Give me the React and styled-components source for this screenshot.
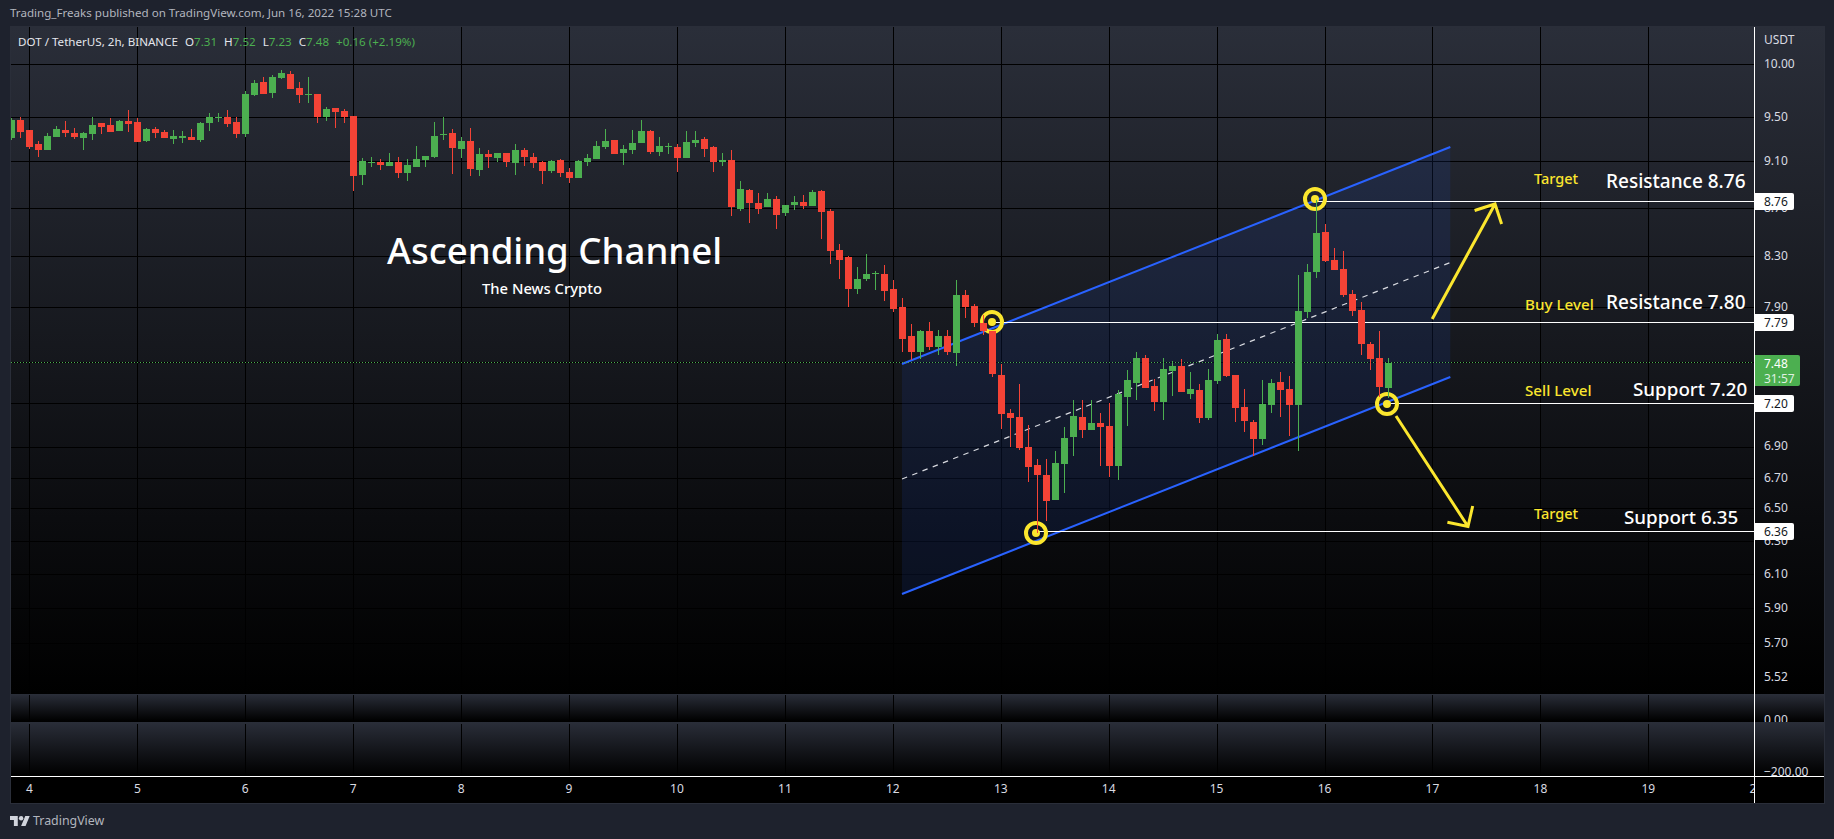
import React from 'react';
import styled, { createGlobalStyle } from 'styled-components';

const FONT = `"Noto Sans", "DejaVu Sans", sans-serif`;
const UP = '#4caf50';
const DOWN = '#f44336';
const YELLOW = '#fbe62e';
const PANE_BG = 'linear-gradient(to bottom, #2a2e39 0%, #000 100%)';

const Global = createGlobalStyle`
  html, body { margin: 0; padding: 0; background: #1e222d; overflow: hidden; }
  * { box-sizing: border-box; }
`;

const Page = styled.div`
  width: 1834px; height: 839px; display: flex; flex-direction: column;
  background: #1e222d; font-family: ${FONT};
`;
const Header = styled.header`
  height: 26px; flex: none; display: flex; align-items: center; padding: 0 0 2px 10px;
  font-size: 11.6px; color: #b2b5be; white-space: nowrap;
`;
const ChartFrame = styled.main`
  flex: none; width: 1815px; height: 778px; margin-left: 10px; border: 1px solid #2a2e39;
  display: grid; grid-template-columns: 1743px 1fr; grid-template-rows: 667px 28px 54px 27px;
  background: #000;
`;
const MainPane = styled.section`
  position: relative; overflow: hidden; background: ${PANE_BG};
`;
const ChartCanvas = styled.svg`
  display: block; width: 1743px; height: 667px;
`;
const SubCanvas = styled.svg`
  display: block; width: 1743px; height: 100%;
`;
const SubPane = styled.section`
  overflow: hidden; background: ${PANE_BG}; border-bottom: 1px solid #000;
`;
const Legend = styled.div`
  position: absolute; left: 7px; top: 6px; display: flex; gap: 7px; font-size: 11.6px; line-height: 18px;
  color: #e4e6ec; white-space: nowrap;
`;
const LegendItem = styled.span``;
const LegendValue = styled.span` color: ${UP}; `;
const Annotation = styled.div`
  position: absolute; left: ${p => p.$x}px; top: ${p => p.$y}px; transform: translateY(-50%);
  white-space: nowrap; line-height: 1.2; font-weight: 500; font-size: ${p => p.$size}px; color: ${p => p.$color};
`;
const PriceAxis = styled.aside`
  position: relative; overflow: hidden; background: ${PANE_BG}; border-left: 1px solid #fff;
`;
const Currency = styled.div`
  position: absolute; left: 9px; top: 5px; font-size: 12px; line-height: 16px; color: #d9dbe2;
`;
const PriceTick = styled.div`
  position: absolute; left: 9px; transform: translateY(-50%); font-size: 12px; line-height: 16px;
  color: #d9dbe2; white-space: nowrap;
`;
const LevelBadge = styled.div`
  position: absolute; left: 0; width: 39px; height: 17px; padding-left: 9px; background: #fff;
  color: #131722; font-size: 12px; line-height: 17px; border-radius: 0 2px 2px 0;
`;
const LastPriceBadge = styled.div`
  position: absolute; left: 0; width: 45px; height: 31px; padding-left: 9px; background: ${UP};
  color: #fff; font-size: 12px; line-height: 15px; display: flex; flex-direction: column; justify-content: center;
  border-radius: 0 2px 2px 0;
`;
const Countdown = styled.span` color: #dff0e0; `;
const TimeAxis = styled.div`
  position: relative; overflow: hidden; background: #000; border-top: 1px solid #fff;
`;
const TimeTick = styled.span`
  position: absolute; top: 4px; transform: translateX(-50%); font-size: 12px; line-height: 16px; color: #d9dbe2;
`;
const AxisCorner = styled.div`
  background: #000; border-top: 1px solid #fff; border-left: 1px solid #fff;
`;
const Footer = styled.footer`
  flex: 1; display: flex; align-items: center; gap: 3px; padding: 0 0 2px 10px;
  font-size: 12.4px; color: #b2b5be;
`;
const Logo = styled.svg` width: 20px; height: 10px; fill: #d1d4dc; display: block; `;

/* candles: colour, body top, body bottom, wick top, wick bottom, read in 3x scale */
const G = 'g', R = 'r';
const GROUPS = [
  { start: -2, y0: 0, rows: [
    [G,360,414,355,420],[R,360,396,351,414],[R,390,442,390,447],[R,432,450,423,471],[G,408,450,400,450],[G,387,411,378,411],
    [R,390,399,363,411],[R,399,411,384,417],[G,399,414,396,450],[G,375,402,351,420],[R,369,381,369,402],[R,375,396,354,396],
    [G,363,393,360,393],[R,363,372,330,396],[R,366,426,354,426],[G,387,423,384,426],[R,387,399,381,414],[R,396,414,390,414],
    [G,408,417,390,432],[G,408,414,393,429],[R,411,420,387,420],[G,369,420,366,426],[G,351,369,339,393],[G,351,353,339,366],
    [R,351,372,330,381],[R,366,402,351,414],[G,282,402,273,411],[G,249,285,240,288],[R,246,282,231,282],[G,231,279,225,294],
    [G,219,234,210,237],[R,222,267,213,267],[R,264,285,246,309],[G,283,285,231,309],[R,282,351,282,369],[G,327,351,321,363],
    [R,324,336,324,384],[R,333,351,327,369],[R,348,528,348,573],[G,483,525,474,555],[G,487,489,471,501],[R,486,495,477,510],
    [G,486,498,459,498],[R,486,519,471,534],[G,495,519,477,543],[G,477,501,438,501],[G,468,480,468,501],[G,408,471,366,474],
    [G,402,405,351,420],[R,399,444,387,522],[G,423,447,411,474],[R,423,507,384,528],[G,462,510,444,528],[R,462,471,450,504],
    [G,459,474,459,486],[R,459,486,459,501],[G,450,489,432,525],[R,450,471,444,498],[R,471,489,459,504],[R,486,513,483,552],
    [G,483,513,480,519],[R,480,519,477,531],[R,516,534,504,549],[G,483,534,480,534],[G,474,486,462,498],[G,438,477,423,477],
    [G,423,441,387,447],[R,420,462,420,462],
  ]},
  { start: 66, y0: 90, rows: [
    [G,177,189,165,225],[G,159,180,120,192],[G,123,159,90,159],[R,123,186,120,192],[G,168,186,141,198],[G,168,170,159,192],
    [R,171,204,162,246],[G,156,204,123,204],[G,150,159,123,171],[R,147,177,141,201],[R,171,216,168,246],[G,210,216,189,228],
    [R,210,351,180,378],[G,297,357,273,363],[R,300,339,297,399],[R,339,357,309,372],[G,327,351,309,351],[R,327,375,318,417],
    [G,345,369,345,378],[G,336,345,318,360],[R,336,348,315,357],[G,306,348,300,348],[R,303,366,300,447],[R,363,483,357,522],
    [R,480,510,462,567],[R,501,597,498,651],[G,567,597,531,612],[G,552,567,492,573],[G,550,552,543,600],[R,552,603,525,633],
    [R,597,657,570,666],[R,651,747,624,786],[R,738,786,702,810],[G,723,786,720,807],[R,723,771,696,780],[G,738,771,720,795],
    [R,738,786,720,795],[G,615,789,570,828],[R,615,651,600,684],[R,648,699,642,711],[R,699,723,675,735],
  ]},
  { start: 107, y0: 270, rows: [
    [R,183,312,183,321],[R,315,432,282,477],[R,429,444,417,531],[R,441,534,342,540],[R,531,591,465,636],[R,585,615,567,790],
    [R,615,693,567,753],[G,579,690,543,690],[G,504,582,471,669],[G,438,501,390,558],[R,441,480,390,504],[G,459,480,390,480],
    [R,459,471,429,588],[R,468,588,399,621],[G,372,588,360,630],[G,330,381,300,468],[G,264,339,246,390],[R,264,354,255,354],
    [R,348,396,327,423],[G,297,396,264,450],[G,288,303,273,378],[R,288,366,267,366],
  ]},
  { start: 129, y0: 180, rows: [
    [G,627,642,576,657],[R,630,714,612,729],[G,600,714,567,720],[G,480,603,462,612],[R,477,588,462,591],[R,585,684,585,726],
    [R,681,723,627,756],[R,726,777,720,828],[G,672,777,600,795],[G,609,675,597,699],[R,606,630,576,711],[R,627,675,588,768],
    [G,393,675,285,813],[G,276,396,252,414],[G,159,276,60,294],[R,156,243,132,246],[R,240,270,204,270],[R,267,345,213,351],
    [R,342,393,330,408],[R,390,492,366,525],[R,492,537,486,570],[R,534,621,453,650],[G,549,624,534,655],
  ]},
];
const CANDLE_STEP = 107.93 / 12;
const candleX = k => Math.round(29.4 + CANDLE_STEP * k);
const CANDLES = GROUPS.flatMap(({ start, y0, rows }) => rows.map((r, i) => {
  const py = v => Math.round(y0 + v / 3);
  const top = py(r[1]);
  return { k: start + i, color: r[0] === G ? UP : DOWN, top, h: Math.max(1, py(r[2]) - top), hi: py(r[3]), lo: py(r[4]) };
}));

const DAYS = [4, 5, 6, 7, 8, 9, 10, 11, 12, 13, 14, 15, 16, 17, 18, 19, 20];
const dayX = i => 29.4 + 107.93 * i;
const GRID_Y = [64, 117, 161, 208, 256, 307, 362, 403, 447, 478, 508, 541, 574, 608, 643];
const TICKS = [
  ['10.00', 64], ['9.50', 117], ['9.10', 161], ['8.70', 208], ['8.30', 256], ['7.90', 307], ['7.50', 362], ['7.10', 403],
  ['6.90', 446], ['6.70', 478], ['6.50', 508], ['6.30', 541], ['6.10', 574], ['5.90', 608], ['5.70', 643], ['5.52', 677],
];
const LEVELS = [
  { label: '8.76', top: 193, y: 201.5, x: 1315 },
  { label: '7.79', top: 314, y: 322.5, x: 992 },
  { label: '7.20', top: 395, y: 403.5, x: 1387 },
  { label: '6.36', top: 523, y: 531.5, x: 1036 },
];
const PIVOTS = [[992, 322], [1036, 533], [1315, 199], [1387, 404]];
const TOP = 27, LEFT = 11;

const NOTES = [
  { text: 'Ascending Channel', x: 387, y: 251, size: 36.6, color: '#fff' },
  { text: 'The News Crypto', x: 482, y: 289, size: 14.8, color: '#fff' },
  { text: 'Target', x: 1534, y: 179, size: 14.5, color: YELLOW },
  { text: 'Resistance 8.76', x: 1606, y: 181, size: 19, color: '#fff' },
  { text: 'Buy Level', x: 1525, y: 304, size: 15.2, color: YELLOW },
  { text: 'Resistance 7.80', x: 1606, y: 302, size: 19, color: '#fff' },
  { text: 'Sell Level', x: 1525, y: 390, size: 15.2, color: YELLOW },
  { text: 'Support 7.20', x: 1633, y: 389, size: 18.8, color: '#fff' },
  { text: 'Target', x: 1534, y: 514, size: 14.5, color: YELLOW },
  { text: 'Support 6.35', x: 1624, y: 517, size: 18.8, color: '#fff' },
];

const Verticals = ({ y1, y2 }) => DAYS.map((_, i) => (
  <line key={i} x1={Math.round(dayX(i)) + 0.5} x2={Math.round(dayX(i)) + 0.5} y1={y1} y2={y2} stroke="#000" strokeWidth="1" />
));

const MainChart = () => (
  <ChartCanvas viewBox={`${LEFT} ${TOP} 1743 667`}>
    <Verticals y1={TOP} y2={694} />
    {GRID_Y.map(y => <line key={y} x1={LEFT} x2={1754} y1={y + 0.5} y2={y + 0.5} stroke="#000" strokeWidth="1" />)}
    <polygon points="902,364 1450.3,147 1450.3,377 902,594" fill="#2962ff" fillOpacity="0.1" />
    <line x1="902" y1="479" x2="1450.3" y2="262.5" stroke="#d8dae0" strokeWidth="1.2" strokeDasharray="5.500 5.500" />
    <line x1="902" y1="364" x2="1450.3" y2="147" stroke="#2962ff" strokeWidth="2" />
    <line x1="902" y1="594" x2="1450.3" y2="377" stroke="#2962ff" strokeWidth="2" />
    <line x1={LEFT} x2="1754" y1="362.5" y2="362.5" stroke={UP} strokeWidth="1" strokeDasharray="1 2" />
    {LEVELS.map(l => <line key={l.label} x1={l.x} x2="1754" y1={l.y} y2={l.y} stroke="#fff" strokeWidth="1" />)}
    {PIVOTS.map(([x, y]) => (
      <g key={x}>
        <circle cx={x} cy={y} r="10" fill="none" stroke={YELLOW} strokeWidth="4" />
        <circle cx={x} cy={y} r="4" fill={YELLOW} />
      </g>
    ))}
    <g fill="none" stroke={YELLOW} strokeWidth="3">
      <path d="M1432.2 319 L1495 204 M1474.6 210.5 L1495 204 L1501.6 224" />
      <path d="M1396 416 L1468 526.5 M1447.4 522.3 L1468 526.5 L1472.7 506" />
    </g>
    <g shapeRendering="crispEdges">
      {CANDLES.map(c => {
        const x = candleX(c.k);
        return (
          <g key={c.k} fill={c.color}>
            <rect x={x} y={c.hi} width="1" height={c.lo - c.hi} />
            <rect x={x - 3} y={c.top} width="7" height={c.h} />
          </g>
        );
      })}
    </g>
  </ChartCanvas>
);

const Sub = () => (
  <SubCanvas preserveAspectRatio="none" viewBox={`${LEFT} 0 1743 10`}>
    <Verticals y1={0.4} y2={10} />
  </SubCanvas>
);

const Badge = ({ label, top }) => <LevelBadge style={{ top: top - TOP }}>{label}</LevelBadge>;

export default function App() {
  return (
    <Page>
      <Global />
      <Header>Trading_Freaks published on TradingView.com, Jun 16, 2022 15:28 UTC</Header>
      <ChartFrame>
        <MainPane>
          <MainChart />
          <Legend>
            <LegendItem>DOT / TetherUS, 2h, BINANCE</LegendItem>
            <LegendItem>O<LegendValue>7.31</LegendValue></LegendItem>
            <LegendItem>H<LegendValue>7.52</LegendValue></LegendItem>
            <LegendItem>L<LegendValue>7.23</LegendValue></LegendItem>
            <LegendItem>C<LegendValue>7.48</LegendValue></LegendItem>
            <LegendValue>+0.16 (+2.19%)</LegendValue>
          </Legend>
          {NOTES.map(n => (
            <Annotation key={n.text + n.y} $x={n.x - LEFT} $y={n.y - TOP} $size={n.size} $color={n.color}>{n.text}</Annotation>
          ))}
        </MainPane>
        <PriceAxis>
          <Currency>USDT</Currency>
          {TICKS.map(([t, y]) => <PriceTick key={t} style={{ top: y - TOP }}>{t}</PriceTick>)}
          {LEVELS.map(l => <Badge key={l.label} label={l.label} top={l.top} />)}
          <LastPriceBadge style={{ top: 355 - TOP }}>
            <span>7.48</span>
            <Countdown>31:57</Countdown>
          </LastPriceBadge>
        </PriceAxis>
        <SubPane><Sub /></SubPane>
        <PriceAxis><PriceTick style={{ top: 26 }}>0.00</PriceTick></PriceAxis>
        <SubPane><Sub /></SubPane>
        <PriceAxis><PriceTick style={{ top: 50 }}>−200.00</PriceTick></PriceAxis>
        <TimeAxis>
          {DAYS.map((d, i) => <TimeTick key={d} style={{ left: dayX(i) - LEFT }}>{d}</TimeTick>)}
        </TimeAxis>
        <AxisCorner />
      </ChartFrame>
      <Footer>
        <Logo viewBox="0 4 36 18">
          <path d="M14 22H7V11H0V4h14v18zM28 22h-8l7.500-18h8L28 22z" />
          <circle cx="20" cy="8" r="4" />
        </Logo>
        TradingView
      </Footer>
    </Page>
  );
}
